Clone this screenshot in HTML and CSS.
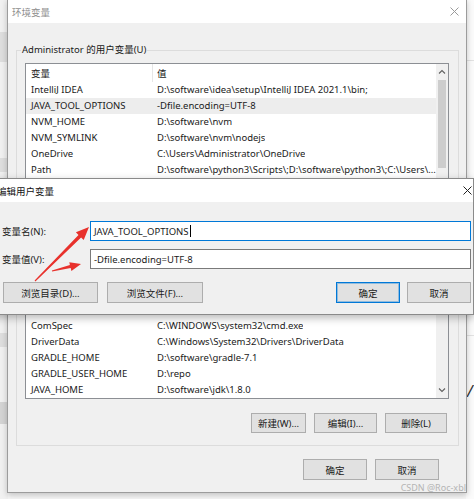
FILE: index.html
```html
<!DOCTYPE html>
<html lang="zh-CN">
<head>
<meta charset="utf-8">
<title>环境变量</title>
<link rel="stylesheet" href="styles.css">
</head>
<body>
<div class="desk">
  <div class="bg-left">
    <div class="bg-block b1"></div>
    <div class="bg-block b2"></div>
    <div class="bg-block b3"></div>
    <div class="bg-block b4"></div>
  </div>
  <div class="bg-right">
    <div class="bg-line l1"></div>
    <div class="bg-line l2"></div>
    <span class="bg-glyph">/</span>
  </div>

  <div class="win main">
    <div class="titlebar">
      <span class="title inactive">环境变量</span>
      <svg class="close" width="9" height="9" viewBox="0 0 9 9"><path d="M0.5 0.5 L8.5 8.5 M8.5 0.5 L0.5 8.5" stroke="#9a9a9a" stroke-width="1" fill="none"/></svg>
    </div>
    <div class="main-body">
      <fieldset class="group">
        <legend>Administrator 的用户变量(U)</legend>
        <div class="list">
          <div class="list-main">
            <div class="list-head"><span class="c1">变量</span><span class="c2">值</span></div>
            <div class="list-body">
              <div class="rows">
                <div class="row"><span class="c1">IntelliJ IDEA</span><span class="c2">D:\software\idea\setup\IntelliJ IDEA 2021.1\bin;</span></div>
                <div class="row hover"><span class="c1">JAVA_TOOL_OPTIONS</span><span class="c2">-Dfile.encoding=UTF-8</span></div>
                <div class="row"><span class="c1">NVM_HOME</span><span class="c2">D:\software\nvm</span></div>
                <div class="row"><span class="c1">NVM_SYMLINK</span><span class="c2">D:\software\nvm\nodejs</span></div>
                <div class="row"><span class="c1">OneDrive</span><span class="c2">C:\Users\Administrator\OneDrive</span></div>
                <div class="row"><span class="c1">Path</span><span class="c2">D:\software\python3\Scripts\;D:\software\python3\;C:\Users\...</span></div>
              </div>
              <div class="rows">
                <div class="row"><span class="c1">CLASSPATH</span><span class="c2">.;%JAVA_HOME%\lib\dt.jar;%JAVA_HOME%\lib\tools.jar</span></div>
                <div class="row"><span class="c1">ComSpec</span><span class="c2">C:\WINDOWS\system32\cmd.exe</span></div>
                <div class="row"><span class="c1">DriverData</span><span class="c2">C:\Windows\System32\Drivers\DriverData</span></div>
                <div class="row"><span class="c1">GRADLE_HOME</span><span class="c2">D:\software\gradle-7.1</span></div>
                <div class="row"><span class="c1">GRADLE_USER_HOME</span><span class="c2">D:\repo</span></div>
                <div class="row"><span class="c1">JAVA_HOME</span><span class="c2">D:\software\jdk\1.8.0</span></div>
              </div>
            </div>
          </div>
          <div class="scroll">
            <svg class="sarrow" width="12" height="16" viewBox="0 0 12 16"><path d="M3 9.5 L6 6.5 L9 9.5" stroke="#606060" stroke-width="1.1" fill="none"/></svg>
            <div class="thumb"></div>
            <div class="track"></div>
            <svg class="sarrow" width="12" height="16" viewBox="0 0 12 16"><path d="M3 6.5 L6 9.5 L9 6.5" stroke="#606060" stroke-width="1.1" fill="none"/></svg>
          </div>
        </div>
        <div class="btnrow group-btns">
          <button class="btn w55">新建(W)...</button>
          <button class="btn w63">编辑(I)...</button>
          <button class="btn w62">删除(L)</button>
        </div>
      </fieldset>
      <div class="btnrow main-btns">
        <button class="btn w64">确定</button>
        <button class="btn w64">取消</button>
      </div>
    </div>
  </div>

  <div class="win dialog">
    <div class="titlebar dtitle">
      <span class="title">编辑用户变量</span>
      <svg class="close" width="9" height="9" viewBox="0 0 9 9"><path d="M0.5 0.5 L8.5 8.5 M8.5 0.5 L0.5 8.5" stroke="#222" stroke-width="1" fill="none"/></svg>
    </div>
    <div class="dialog-body">
      <label class="lbl">变量名(N):</label>
      <div class="input focus"><span>JAVA_TOOL_OPTIONS</span><span class="caret"></span></div>
      <label class="lbl">变量值(V):</label>
      <div class="input"><span>-Dfile.encoding=UTF-8</span></div>
      <div class="btnrow dialog-btns">
        <button class="btn w95">浏览目录(D)...</button>
        <button class="btn w96">浏览文件(F)...</button>
        <span class="spacer"></span>
        <button class="btn w64 default">确定</button>
        <button class="btn w64">取消</button>
      </div>
    </div>
  </div>

  <svg class="arrows" width="474" height="499" viewBox="0 0 474 499">
    <polygon fill="#e8312c" points="34.6,280.6 78.5,234.9 75.9,232.3 89,227 83.7,240.1 81.1,237.5 35.4,281.4"/>
    <polygon fill="#e8312c" points="51.9,270.5 69.9,265.0 69.3,262.2 81,264 71.4,271.0 70.7,268.1 52.1,271.5"/>
  </svg>

  <div class="watermark">CSDN @Roc-xbl</div>
</div>
</body>
</html>
```

FILE: styles.css
```css
* { box-sizing: border-box; }
html, body { margin: 0; padding: 0; }
body {
  width: 474px;
  height: 499px;
  overflow: hidden;
  background: #f6f6f6;
  font-family: "Noto Sans", "Noto Sans CJK SC", sans-serif;
  font-size: 9.5px;
  color: #1a1a1a;
}
.desk { position: relative; width: 474px; height: 499px; overflow: hidden; }

/* background behind windows */
.bg-left { position: absolute; left: 0; top: 0; width: 8px; height: 499px; background: #f1f1f1; }
.bg-block { position: absolute; left: 0; width: 8px; background: #dedede; }
.b1 { top: 32px; height: 30px; }
.b2 { top: 158px; height: 14px; }
.b3 { top: 333px; height: 14px; }
.b4 { top: 402px; height: 22px; background: #d4d4d4; }
.bg-right { position: absolute; right: 0; top: 0; width: 8px; height: 499px; background: #fbfbfb; }
.bg-line { position: absolute; left: 0; width: 8px; height: 1px; background: #e2e2e2; }
.l1 { top: 60px; }
.l2 { top: 335px; }
.bg-glyph { position: absolute; left: 1px; top: 380px; font-size: 16px; color: #333; font-style: italic; }

/* windows */
.win { position: absolute; display: flex; flex-direction: column; background: #f0f0f0; }
.main {
  left: 7px; top: -1px; width: 460px; height: 494px;
  border: 1px solid #9c9c9c;
  box-shadow: 0 2px 6px rgba(0,0,0,0.22);
}
.titlebar {
  height: 23px; flex: none; background: #fff;
  display: flex; align-items: center; justify-content: space-between;
  padding: 0 7px 0 4px;
}
.title { font-size: 9.5px; white-space: nowrap; }
.title.inactive { color: #8e8e8e; }

.main-body { flex: 1; display: flex; flex-direction: column; padding: 20px 7px 0 8px; }
.group {
  margin: 0; min-width: 0;
  border: 1px solid #dcdcdc;
  padding: 0 9px 12px 8px;
}
.group legend { padding: 0 1px; margin-left: -4px; line-height: 14px; color: #1a1a1a; }

.list {
  margin-top: 6px; height: 336px;
  border: 1px solid #8c8f94; background: #fff;
  display: flex;
}
.list-main { flex: 1; display: flex; flex-direction: column; min-width: 0; }
.list-head { height: 18px; flex: none; display: flex; align-items: center; position: relative; }
.list-head .c1::after {
  content: ""; position: absolute; left: 126px; top: 0; width: 1px; height: 18px; background: #e6e6e6;
}
.c1 { width: 130px; flex: none; padding-left: 5px; white-space: nowrap; }
.c2 { padding-left: 1px; white-space: nowrap; overflow: hidden; }
.list-body { flex: 1; display: flex; flex-direction: column; justify-content: space-between; }
.row { height: 16px; line-height: 16px; display: flex; }
.row.hover { background: #ededed; }

.scroll { width: 12px; flex: none; background: #f0f0f0; display: flex; flex-direction: column; }
.sarrow { display: block; flex: none; }
.thumb { height: 88px; flex: none; background: #cdcdcd; margin: 0 2px; }
.track { flex: 1; }

.btnrow { display: flex; }
.group-btns { margin-top: 14px; justify-content: flex-end; gap: 8px; padding-right: 2px; }
.main-btns { margin-top: 13px; justify-content: flex-end; gap: 8px; padding-right: 20px; }

.btn {
  height: 20px; padding: 0;
  font-family: inherit; font-size: 9.5px; color: #1a1a1a;
  background: #e1e1e1; border: 1px solid #adadad;
}
.main-btns .btn { height: 21px; }
.btn.default { border-color: #0078d7; box-shadow: inset 0 0 0 1px rgba(0,120,215,0.35); }
.w55 { width: 55px; }
.w62 { width: 62px; }
.w63 { width: 63px; }
.w64 { width: 64px; }
.w95 { width: 95px; }
.w96 { width: 96px; }

/* edit dialog */
.dialog {
  left: -11px; top: 178px; width: 485px; height: 137px;
  border: 1px solid #8a8a8a;
  box-shadow: 0 3px 8px rgba(0,0,0,0.28);
}
.dtitle { padding: 0 1px 0 7px; }
.dtitle .title { color: #111; }
.dialog-body {
  flex: 1;
  display: grid; grid-template-columns: 88px 1fr;
  row-gap: 8px; align-items: center;
  padding: 19px 2px 0 12px;
  align-content: start;
}
.lbl { white-space: nowrap; }
.input {
  height: 20px; background: #fff; border: 1px solid #7a7a7a;
  display: flex; align-items: center; padding-left: 3px;
}
.input.focus { border-color: #0078d7; }
.caret { width: 1px; height: 12px; background: #000; margin-left: 1px; }
.dialog-btns { grid-column: 1 / 3; margin-top: 5px; padding-left: 1px; gap: 9px; }
.dialog-btns .btn { height: 21px; }
.dialog-btns .spacer { flex: 1; }
.dialog-btns .default { margin-right: -2px; }

.arrows { position: absolute; left: 0; top: 0; pointer-events: none; }

.watermark {
  position: absolute; right: 8px; top: 481px;
  font-size: 9px; color: #b4b4b4; white-space: nowrap;
}
```
